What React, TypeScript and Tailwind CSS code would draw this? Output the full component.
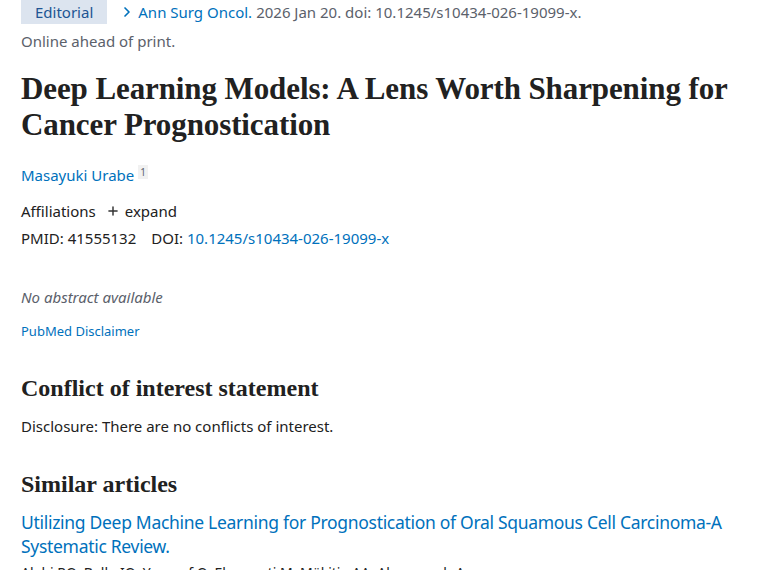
import { Plus, ChevronRight } from 'lucide-react';

const sans = "font-['Segoe_UI','Noto_Sans',sans-serif]";
const serif = "font-['Liberation_Serif',serif]";

export default function App() {
    return (
        <div className={`w-[760px] h-[570px] overflow-hidden bg-white px-[21px] ${sans} text-[#212121]`}>
            <div className="flex items-center gap-3 text-[15px] leading-[24px]">
                <span className="bg-[#dce4ef] text-[#205493] px-[14px]">Editorial</span>
                <span className="flex items-center">
                    <ChevronRight className="w-4 h-4 text-[#0071bc]" strokeWidth={2.5} />
                    <span className="ml-[3px] text-[#0071bc]">Ann Surg Oncol.</span>
                    <span className="ml-[4px] text-[#5b616b]">2026 Jan 20. doi: 10.1245/s10434-026-19099-x.</span>
                </span>
            </div>
            <p className="text-[15px] text-[#5b616b] leading-[20px] mt-[7px]">Online ahead of print.</p>

            <h1 className={`${serif} font-bold text-[31px] leading-[36px] mt-[20px] tracking-[-0.1px]`}>
                Deep Learning Models: A Lens Worth Sharpening for Cancer Prognostication
            </h1>

            <div className="mt-[22px] text-[15px] leading-[20px]">
                <span className="text-[#0071bc]">Masayuki Urabe</span>
                <sup className="ml-[4px] text-[10px] text-[#5b616b] bg-[#f1f1f1] px-[2px]">1</sup>
            </div>

            <div className="mt-[16px] flex items-center text-[15px] leading-[20px]">
                <span>Affiliations</span>
                <Plus className="ml-[10px] w-[14px] h-[14px] text-[#333]" strokeWidth={2.5} />
                <span className="ml-[5px]">expand</span>
            </div>
            <div className="mt-[7px] text-[15px] leading-[20px]">
                <span>PMID: 41555132</span>
                <span className="ml-[15px]">DOI: </span>
                <span className="text-[#0071bc]">10.1245/s10434-026-19099-x</span>
            </div>

            <p className="mt-[39px] italic text-[15px] leading-[20px] text-[#5b616b]">No abstract available</p>
            <p className="mt-[15px] text-[13px] leading-[18px] text-[#0071bc]">PubMed Disclaimer</p>

            <h2 className={`${serif} font-bold text-[24px] leading-[30px] mt-[33px]`}>Conflict of interest statement</h2>
            <p className="mt-[13px] text-[15px] leading-[20px]">Disclosure: There are no conflicts of interest.</p>

            <h2 className={`${serif} font-bold text-[24px] leading-[30px] mt-[33px]`}>Similar articles</h2>
            <p className="mt-[11px] text-[17.5px] leading-[24px] text-[#0071bc] tracking-[-0.3px]">
                Utilizing Deep Machine Learning for Prognostication of Oral Squamous Cell Carcinoma-A Systematic Review.
            </p>
            <p className="mt-[5px] text-[14px] leading-[20px] text-[#212121]">
                Alahi RO, Bello IO, Youssef O, Elmusrati M, Mäkitie AA, Almangush A.
            </p>
        </div>
    );
}
